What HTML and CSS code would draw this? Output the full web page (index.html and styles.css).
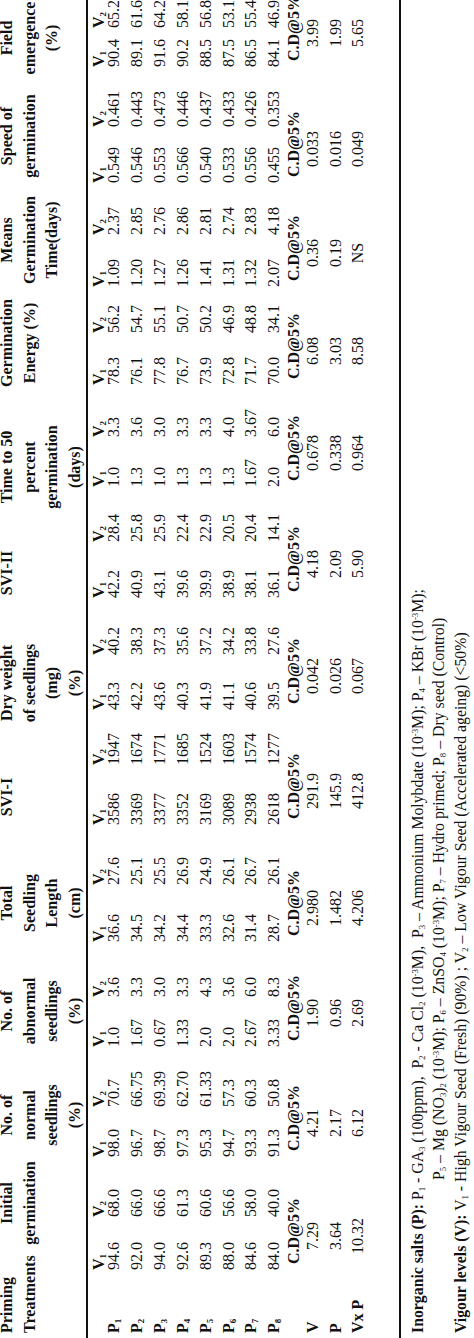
FILE: index.html
```html
<!DOCTYPE html>
<html>
<head>
<meta charset="utf-8">
<link rel="stylesheet" href="styles.css">
</head>
<body>
<div class="page">
<div class="sheet">
  <div class="head">
    <div class="h h0"><span>Priming</span><span>Treatments</span></div>
    <div class="h h1"><span>Initial</span><span>germination</span></div>
    <div class="h h2"><span>No. of</span><span>normal</span><span>seedlings</span><span>(%)</span></div>
    <div class="h h3"><span>No. of</span><span>abnormal</span><span>seedlings</span><span>(%)</span></div>
    <div class="h h4"><span>Total</span><span>Seedling</span><span>Length</span><span>(cm)</span></div>
    <div class="h h5"><span>SVI-I</span></div>
    <div class="h h6"><span>Dry weight</span><span>of seedlings</span><span>(mg)</span><span>(%)</span></div>
    <div class="h h7"><span>SVI-II</span></div>
    <div class="h h8"><span>Time to 50</span><span>percent</span><span>germination</span><span>(days)</span></div>
    <div class="h h9"><span>Germination</span><span>Energy (%)</span></div>
    <div class="h h10"><span>Means</span><span>Germination</span><span>Time(days)</span></div>
    <div class="h h11"><span>Speed of</span><span>germination</span></div>
    <div class="h h12"><span>Field</span><span>emergence</span><span>(%)</span></div>
  </div>
  <div class="rule"></div>

  <div class="row vrow">
    <div></div>
    <div>V<sub>1</sub></div><div>V<sub>2</sub></div>
    <div>V<sub>1</sub></div><div>V<sub>2</sub></div>
    <div>V<sub>1</sub></div><div>V<sub>2</sub></div>
    <div>V<sub>1</sub></div><div>V<sub>2</sub></div>
    <div>V<sub>1</sub></div><div>V<sub>2</sub></div>
    <div>V<sub>1</sub></div><div>V<sub>2</sub></div>
    <div>V<sub>1</sub></div><div>V<sub>2</sub></div>
    <div>V<sub>1</sub></div><div>V<sub>2</sub></div>
    <div>V<sub>1</sub></div><div>V<sub>2</sub></div>
    <div>V<sub>1</sub></div><div>V<sub>2</sub></div>
    <div>V<sub>1</sub></div><div>V<sub>2</sub></div>
    <div>V<sub>1</sub></div><div>V<sub>2</sub></div>
  </div>

  <div class="row prow">
    <div class="lab">P<sub>1</sub></div>
    <div>94.6</div><div>68.0</div><div>98.0</div><div>70.7</div><div>1.0</div><div>3.6</div><div>36.6</div><div>27.6</div><div>3586</div><div>1947</div><div>43.3</div><div>40.2</div><div>42.2</div><div>28.4</div><div>1.0</div><div>3.3</div><div>78.3</div><div>56.2</div><div>1.09</div><div>2.37</div><div>0.549</div><div>0.461</div><div>90.4</div><div>65.2</div>
  </div>
  <div class="row prow">
    <div class="lab">P<sub>2</sub></div>
    <div>92.0</div><div>66.0</div><div>96.7</div><div>66.75</div><div>1.67</div><div>3.3</div><div>34.5</div><div>25.1</div><div>3369</div><div>1674</div><div>42.2</div><div>38.3</div><div>40.9</div><div>25.8</div><div>1.3</div><div>3.6</div><div>76.1</div><div>54.7</div><div>1.20</div><div>2.85</div><div>0.546</div><div>0.443</div><div>89.1</div><div>61.6</div>
  </div>
  <div class="row prow">
    <div class="lab">P<sub>3</sub></div>
    <div>94.0</div><div>66.6</div><div>98.7</div><div>69.39</div><div>0.67</div><div>3.0</div><div>34.2</div><div>25.5</div><div>3377</div><div>1771</div><div>43.6</div><div>37.3</div><div>43.1</div><div>25.9</div><div>1.0</div><div>3.0</div><div>77.8</div><div>55.1</div><div>1.27</div><div>2.76</div><div>0.553</div><div>0.473</div><div>91.6</div><div>64.2</div>
  </div>
  <div class="row prow">
    <div class="lab">P<sub>4</sub></div>
    <div>92.6</div><div>61.3</div><div>97.3</div><div>62.70</div><div>1.33</div><div>3.3</div><div>34.4</div><div>26.9</div><div>3352</div><div>1685</div><div>40.3</div><div>35.6</div><div>39.6</div><div>22.4</div><div>1.3</div><div>3.3</div><div>76.7</div><div>50.7</div><div>1.26</div><div>2.86</div><div>0.566</div><div>0.446</div><div>90.2</div><div>58.1</div>
  </div>
  <div class="row prow">
    <div class="lab">P<sub>5</sub></div>
    <div>89.3</div><div>60.6</div><div>95.3</div><div>61.33</div><div>2.0</div><div>4.3</div><div>33.3</div><div>24.9</div><div>3169</div><div>1524</div><div>41.9</div><div>37.2</div><div>39.9</div><div>22.9</div><div>1.3</div><div>3.3</div><div>73.9</div><div>50.2</div><div>1.41</div><div>2.81</div><div>0.540</div><div>0.437</div><div>88.5</div><div>56.8</div>
  </div>
  <div class="row prow">
    <div class="lab">P<sub>6</sub></div>
    <div>88.0</div><div>56.6</div><div>94.7</div><div>57.3</div><div>2.0</div><div>3.6</div><div>32.6</div><div>26.1</div><div>3089</div><div>1603</div><div>41.1</div><div>34.2</div><div>38.9</div><div>20.5</div><div>1.3</div><div>4.0</div><div>72.8</div><div>46.9</div><div>1.31</div><div>2.74</div><div>0.533</div><div>0.433</div><div>87.5</div><div>53.1</div>
  </div>
  <div class="row prow">
    <div class="lab">P<sub>7</sub></div>
    <div>84.6</div><div>58.0</div><div>93.3</div><div>60.3</div><div>2.67</div><div>6.0</div><div>31.4</div><div>26.7</div><div>2938</div><div>1574</div><div>40.6</div><div>33.8</div><div>38.1</div><div>20.4</div><div>1.67</div><div>3.67</div><div>71.7</div><div>48.8</div><div>1.32</div><div>2.83</div><div>0.556</div><div>0.426</div><div>86.5</div><div>55.4</div>
  </div>
  <div class="row prow">
    <div class="lab">P<sub>8</sub></div>
    <div>84.0</div><div>40.0</div><div>91.3</div><div>50.8</div><div>3.33</div><div>8.3</div><div>28.7</div><div>26.1</div><div>2618</div><div>1277</div><div>39.5</div><div>27.6</div><div>36.1</div><div>14.1</div><div>2.0</div><div>6.0</div><div>70.0</div><div>34.1</div><div>2.07</div><div>4.18</div><div>0.455</div><div>0.353</div><div>84.1</div><div>46.9</div>
  </div>

  <div class="row cdrow">
    <div></div>
    <div class="cd"><span>C.D@5%</span></div>
    <div class="cd"><span>C.D@5%</span></div>
    <div class="cd"><span>C.D@5%</span></div>
    <div class="cd"><span>C.D@5%</span></div>
    <div class="cd"><span>C.D@5%</span></div>
    <div class="cd"><span>C.D@5%</span></div>
    <div class="cd"><span>C.D@5%</span></div>
    <div class="cd"><span>C.D@5%</span></div>
    <div class="cd"><span>C.D@5%</span></div>
    <div class="cd"><span>C.D@5%</span></div>
    <div class="cd"><span>C.D@5%</span></div>
    <div class="cd"><span>C.D@5%</span></div>
  </div>
  <div class="row crow">
    <div class="lab">V</div>
    <div class="cv"><span>7.29</span></div><div class="cv"><span>4.21</span></div><div class="cv"><span>1.90</span></div><div class="cv"><span>2.980</span></div><div class="cv"><span>291.9</span></div><div class="cv"><span>0.042</span></div><div class="cv"><span>4.18</span></div><div class="cv"><span>0.678</span></div><div class="cv"><span>6.08</span></div><div class="cv"><span>0.36</span></div><div class="cv"><span>0.033</span></div><div class="cv"><span>3.99</span></div>
  </div>
  <div class="row crow">
    <div class="lab">P</div>
    <div class="cv"><span>3.64</span></div><div class="cv"><span>2.17</span></div><div class="cv"><span>0.96</span></div><div class="cv"><span>1.482</span></div><div class="cv"><span>145.9</span></div><div class="cv"><span>0.026</span></div><div class="cv"><span>2.09</span></div><div class="cv"><span>0.338</span></div><div class="cv"><span>3.03</span></div><div class="cv"><span>0.19</span></div><div class="cv"><span>0.016</span></div><div class="cv"><span>1.99</span></div>
  </div>
  <div class="row crow">
    <div class="lab">Vx P</div>
    <div class="cv"><span>10.32</span></div><div class="cv"><span>6.12</span></div><div class="cv"><span>2.69</span></div><div class="cv"><span>4.206</span></div><div class="cv"><span>412.8</span></div><div class="cv"><span>0.067</span></div><div class="cv"><span>5.90</span></div><div class="cv"><span>0.964</span></div><div class="cv"><span>8.58</span></div><div class="cv"><span>NS</span></div><div class="cv"><span>0.049</span></div><div class="cv"><span>5.65</span></div>
  </div>

  <div class="rule rule2"></div>

  <div class="notes">
    <div class="nline"><b>Inorganic salts (P):</b> P<sub>1</sub> - GA<sub>3</sub> (100ppm), &nbsp;P<sub>2</sub> - Ca Cl<sub>2</sub> (10<sup>-3</sup>M), &nbsp;P<sub>3</sub> – Ammonium Molybdate (10<sup>-3</sup>M); P<sub>4</sub> – KBr (10<sup>-3</sup>M);</div>
    <div class="nline indent">P<sub>5</sub> – Mg (NO<sub>3</sub>)<sub>2</sub> (10<sup>-3</sup>M); P<sub>6</sub> – ZnSO<sub>4</sub> (10<sup>-3</sup>M); P<sub>7</sub> – Hydro primed; P<sub>8</sub> – Dry seed (Control)</div>
    <div class="nline"><b>Vigour levels (V):</b> V<sub>1</sub> - High Vigour Seed (Fresh) (90%) ; V<sub>2</sub> – Low Vigour Seed (Accelerated ageing) (&lt;50%)</div>
  </div>
</div>
</div>
</body>
</html>
```

FILE: styles.css
```css
html, body {
  margin: 0;
  padding: 0;
  background: #fff;
  overflow: hidden;
}

.page {
  width: 474px;
  height: 1338px;
  overflow: hidden;
  background: #fff;
}

.sheet {
  width: 1400px;
  display: flex;
  flex-direction: column;
  transform-origin: 0 0;
  transform: translateY(1338px) rotate(-90deg);
  font-family: "Liberation Serif", "Times New Roman", serif;
  font-size: 16px;
  color: #111;
}

/* header */
.head {
  display: flex;
  margin-top: -4px;
  height: 90px;
  line-height: 22.5px;
  font-weight: bold;
  white-space: nowrap;
}

.h {
  flex: none;
  display: flex;
  flex-direction: column;
  align-items: center;
}

.h0 { width: 85px; align-items: flex-start; padding-left: 5px; }
.h1 { width: 90px; }
.h2 { width: 86px; }
.h3 { width: 122px; }
.h4 { width: 94px; }
.h5 { width: 118px; }
.h6 { width: 110px; }
.h7 { width: 110px; }
.h8 { width: 102px; }
.h9 { width: 146px; }
.h10 { width: 60px; }
.h11 { width: 148px; }
.h12 { width: 48px; }

.rule {
  height: 2px;
  background: #111;
}

.rule2 {
  margin-top: 29px;
}

/* rows */
.row {
  display: grid;
  grid-template-columns: 68px 53px 60px 50px 60px 50px 55px 57px 60px 60px 55px 55px 57px 56px 55px 50px 52px 52px 46px 52px 52px 56px 60px 39px 70px;
  white-space: nowrap;
}

.row sub, .notes sub {
  font-size: 0.55em;
  line-height: 0;
  vertical-align: -0.25em;
}

.notes sup {
  font-size: 0.55em;
  line-height: 0;
  vertical-align: 0.6em;
}

.vrow {
  height: 15px;
  line-height: 22px;
  font-weight: bold;
}

.prow {
  line-height: 22.9px;
}

.lab {
  font-weight: bold;
  padding-left: 5px;
}

.cdrow {
  line-height: 16px;
  font-weight: bold;
}

.crow {
  line-height: 22.5px;
}

.cd, .cv {
  grid-column: span 2;
  padding-left: 6px;
}

.cd span {
  display: inline-block;
  width: 66px;
  text-align: center;
}

.cv span {
  display: inline-block;
  width: 56px;
  text-align: center;
}

/* notes */
.notes {
  padding-top: 6px;
  padding-left: 5px;
  font-size: 15.8px;
  line-height: 21.5px;
  white-space: nowrap;
}

.indent {
  padding-left: 153px;
}
```
